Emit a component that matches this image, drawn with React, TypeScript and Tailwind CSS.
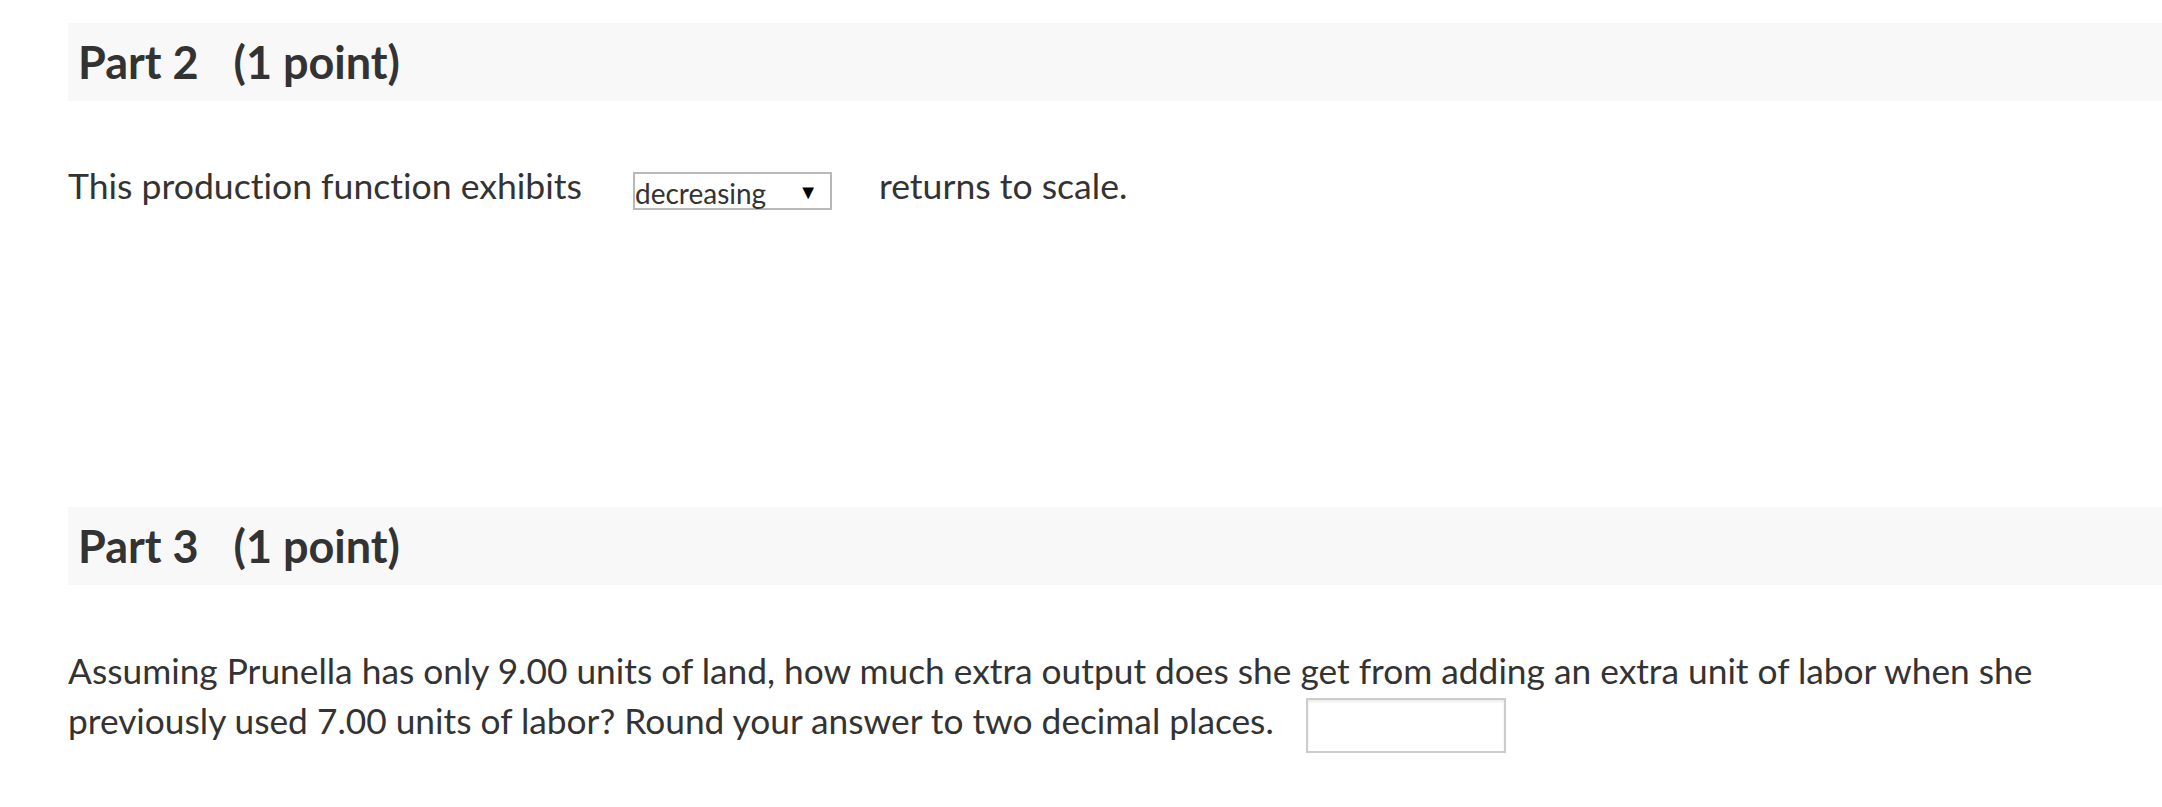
export default function App() {
  return (
    <div className="min-h-screen bg-white pl-[68px] pt-[23px] text-[#333333] font-['Lato','Liberation_Sans',sans-serif] [font-variant-ligatures:none]">
      {/* Part 2 */}
      <div className="h-[78px] bg-[#f8f8f8] flex items-center pl-[10px]">
        <h3 className="text-[45px] font-bold leading-none">
          Part 2<span className="ml-[35px]">(1 point)</span>
        </h3>
      </div>

      <div className="mt-[60px] flex items-center h-[50px] text-[35.6px] leading-[50px]">
        <span>This production function exhibits</span>
        <div className="ml-[51px] mt-[10px] w-[199px] h-[38px] border-2 border-[#b8b8b8] flex items-center justify-between pr-[12px] text-[28px] leading-none text-[#333]">
          <span className="pt-[3px]">decreasing</span>
          <span className="text-[20px] text-black">▼</span>
        </div>
        <span className="ml-[47px]">returns to scale.</span>
      </div>

      {/* Part 3 */}
      <div className="mt-[296px] h-[78px] bg-[#f8f8f8] flex items-center pl-[10px]">
        <h3 className="text-[45px] font-bold leading-none">
          Part 3<span className="ml-[35px]">(1 point)</span>
        </h3>
      </div>

      <p className="mt-[61px] pr-[60px] text-[35.3px] leading-[50px]">
        Assuming Prunella has only 9.00 units of land, how much extra output does she get from adding an extra unit of labor when she previously used 7.00 units of labor? Round your answer to two decimal places.
        <input
          type="text"
          className="ml-[32px] w-[200px] h-[55px] border-2 border-[#cccccc] shadow-[inset_0_2px_3px_rgba(0,0,0,0.08)] align-middle bg-white"
        />
      </p>
    </div>
  )
}
